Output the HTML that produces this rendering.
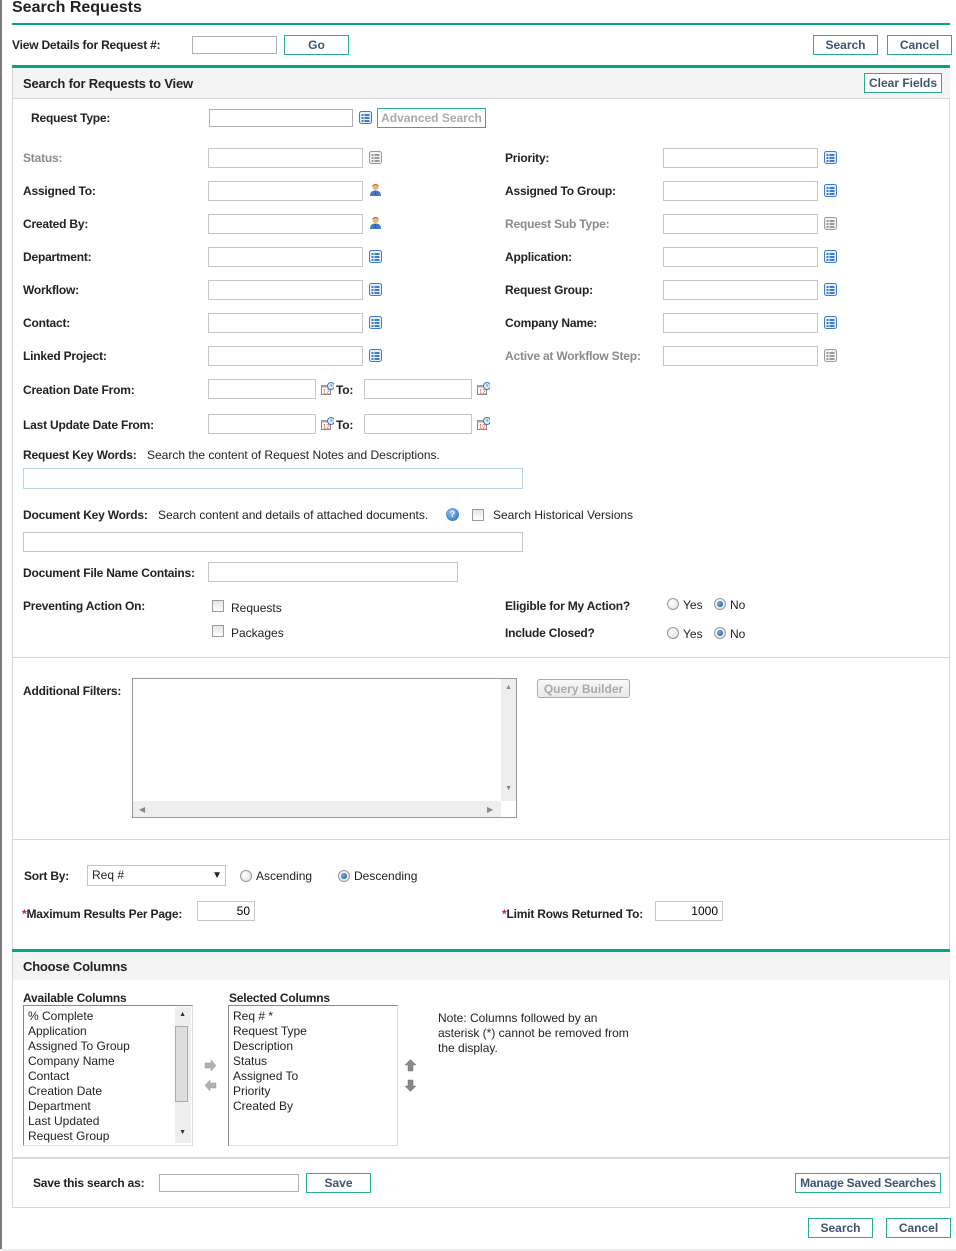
<!DOCTYPE html>
<html><head><meta charset="utf-8"><style>
body{margin:0;width:956px;height:1251px;position:relative;background:#fff;font-family:"Liberation Sans",Arial,sans-serif;overflow:hidden}
.a{position:absolute}
.lb{position:absolute;font-weight:bold;font-size:12px;color:#222;line-height:14px;white-space:nowrap;letter-spacing:-0.2px}
.dl{color:#8a8a8a}
.tx{position:absolute;font-size:12px;color:#222;line-height:14px;white-space:nowrap}
.in{position:absolute;border:1px solid #c6c6c6;background:#fff;box-sizing:border-box;height:20px}
.bt{position:absolute;border:1px solid #27b08d;background:#fff;box-sizing:border-box;font-weight:bold;font-size:12px;color:#3c5573;text-align:center;line-height:19px}
.hl{position:absolute;background:#d6d6d6;height:1px}
.ic{position:absolute;width:13px;height:13px}
.cb{position:absolute;width:11px;height:11px;border:1px solid #9a9a9a;background:linear-gradient(#e6e6e6,#fff);box-sizing:border-box}
.rd{position:absolute;width:12px;height:12px;border-radius:50%;border:1px solid #999;background:radial-gradient(circle at 40% 40%,#fff,#ddd);box-sizing:border-box}
.rd.on::after{content:"";position:absolute;left:2px;top:2px;width:6px;height:6px;border-radius:50%;background:radial-gradient(circle at 40% 40%,#6fb0ef,#0b4c93)}
.li{font-size:12px;color:#222;line-height:15px}
.ar{position:absolute;width:13px;height:13px}
</style></head><body>
<svg width="0" height="0" style="position:absolute"><defs>
<g id="lst"><rect x="0.5" y="0.5" width="12" height="12" rx="2" fill="#e8f1fb" stroke="#3d7cc9"/><rect x="2.5" y="3" width="2" height="2" fill="#3d7cc9"/><rect x="5.5" y="3" width="5" height="2" fill="#3d7cc9"/><rect x="2.5" y="6" width="2" height="2" fill="#3d7cc9"/><rect x="5.5" y="6" width="5" height="2" fill="#3d7cc9"/><rect x="2.5" y="9" width="2" height="2" fill="#3d7cc9"/><rect x="5.5" y="9" width="5" height="2" fill="#3d7cc9"/></g>
<g id="lstg"><rect x="0.5" y="0.5" width="12" height="12" rx="2" fill="#f4f4f4" stroke="#999"/><rect x="2.5" y="3" width="2" height="2" fill="#999"/><rect x="5.5" y="3" width="5" height="2" fill="#999"/><rect x="2.5" y="6" width="2" height="2" fill="#999"/><rect x="5.5" y="6" width="5" height="2" fill="#999"/><rect x="2.5" y="9" width="2" height="2" fill="#999"/><rect x="5.5" y="9" width="5" height="2" fill="#999"/></g>
<g id="usr"><circle cx="6.5" cy="4" r="3" fill="#f0b070"/><path d="M3.5 3.5 Q6.5 0 9.5 3.5 L9.5 2.5 Q6.5 -0.5 3.5 2.5Z" fill="#a0521d"/><path d="M1 13 Q1 7.5 6.5 7.5 Q12 7.5 12 13Z" fill="#3c7ccc"/><path d="M6 8 L7 8 L7.3 12 L5.7 12Z" fill="#d02020"/></g>
<g id="cal"><rect x="0.5" y="3.5" width="9" height="9" fill="#fff" stroke="#888"/><rect x="0.5" y="3.5" width="9" height="2" fill="#aaa"/><text x="2" y="11.5" font-size="6" fill="#e04020" font-family="Liberation Sans">12</text><circle cx="10" cy="4" r="3.5" fill="#dfeefc" stroke="#3b78c0"/><path d="M10 2 V4 H11.5" stroke="#3b78c0" fill="none" stroke-width="0.8"/></g>
<g id="arr"><path d="M1 4 H7 V1 L12 6.5 L7 12 V9 H1Z" fill="#b0b0b0" stroke="#999" stroke-width="0.5"/></g>
<g id="up"><path d="M6.5 0.5 L12 6 H9 V12 H4 V6 H1Z" fill="#888" stroke="#777" stroke-width="0.5"/></g>
</defs></svg>

<div class="a" style="left:0;top:0;width:2px;height:1251px;background:#7a7a7a"></div>
<div class="a" style="left:12px;top:-1px;font-weight:bold;font-size:16px;color:#222">Search Requests</div>
<div class="a" style="left:12px;top:23px;width:938px;height:2px;background:#00a982"></div>
<div class="lb" style="left:12px;top:38px">View Details for Request #:</div>
<div class="in" style="left:192px;top:36px;width:85px;height:18px;border-color:#b0b0b0"></div>
<div class="bt" style="left:284px;top:35px;width:65px;height:20px">Go</div>
<div class="bt" style="left:813px;top:35px;width:65px;height:20px">Search</div>
<div class="bt" style="left:887px;top:35px;width:65px;height:20px">Cancel</div>

<div class="a" style="left:12px;top:65px;width:938px;height:3px;background:#00a982"></div>
<div class="a" style="left:12px;top:68px;width:938px;height:1090px;border:1px solid #d6d6d6;border-top:none;box-sizing:border-box"></div>
<div class="a" style="left:13px;top:68px;width:937px;height:30px;background:#f4f4f4;border-bottom:1px solid #d6d6d6"></div>
<div class="a" style="left:23px;top:76px;font-weight:bold;font-size:13px;color:#222;letter-spacing:-0.2px">Search for Requests to View</div>
<div class="bt" style="left:864px;top:73px;width:78px;height:20px">Clear Fields</div>

<div class="lb" style="left:31px;top:111px">Request Type:</div>
<div class="in" style="left:209px;top:109px;width:144px;height:18px;border-color:#b0b0b0"></div>
<svg class="ic" style="left:359px;top:111px"><use href="#lst"/></svg>
<div class="bt" style="left:377px;top:108px;width:109px;height:20px;color:#aaa;font-weight:bold">Advanced Search</div>

<div class="lb dl" style="left:23px;top:151px;font-weight:bold">Status:</div>
<div class="in" style="left:208px;top:148px;width:155px"></div><svg class="ic" style="left:369px;top:151px"><use href="#lstg"/></svg>
<div class="lb" style="left:505px;top:151px">Priority:</div>
<div class="in" style="left:663px;top:148px;width:155px"></div><svg class="ic" style="left:824px;top:151px"><use href="#lst"/></svg>

<div class="lb" style="left:23px;top:184px">Assigned To:</div>
<div class="in" style="left:208px;top:181px;width:155px"></div><svg class="ic" style="left:369px;top:183px"><use href="#usr"/></svg>
<div class="lb" style="left:505px;top:184px">Assigned To Group:</div>
<div class="in" style="left:663px;top:181px;width:155px"></div><svg class="ic" style="left:824px;top:184px"><use href="#lst"/></svg>

<div class="lb" style="left:23px;top:217px">Created By:</div>
<div class="in" style="left:208px;top:214px;width:155px"></div><svg class="ic" style="left:369px;top:216px"><use href="#usr"/></svg>
<div class="lb dl" style="left:505px;top:217px">Request Sub Type:</div>
<div class="in" style="left:663px;top:214px;width:155px"></div><svg class="ic" style="left:824px;top:217px"><use href="#lstg"/></svg>

<div class="lb" style="left:23px;top:250px">Department:</div>
<div class="in" style="left:208px;top:247px;width:155px"></div><svg class="ic" style="left:369px;top:250px"><use href="#lst"/></svg>
<div class="lb" style="left:505px;top:250px">Application:</div>
<div class="in" style="left:663px;top:247px;width:155px"></div><svg class="ic" style="left:824px;top:250px"><use href="#lst"/></svg>

<div class="lb" style="left:23px;top:283px">Workflow:</div>
<div class="in" style="left:208px;top:280px;width:155px"></div><svg class="ic" style="left:369px;top:283px"><use href="#lst"/></svg>
<div class="lb" style="left:505px;top:283px">Request Group:</div>
<div class="in" style="left:663px;top:280px;width:155px"></div><svg class="ic" style="left:824px;top:283px"><use href="#lst"/></svg>

<div class="lb" style="left:23px;top:316px">Contact:</div>
<div class="in" style="left:208px;top:313px;width:155px"></div><svg class="ic" style="left:369px;top:316px"><use href="#lst"/></svg>
<div class="lb" style="left:505px;top:316px">Company Name:</div>
<div class="in" style="left:663px;top:313px;width:155px"></div><svg class="ic" style="left:824px;top:316px"><use href="#lst"/></svg>

<div class="lb" style="left:23px;top:349px">Linked Project:</div>
<div class="in" style="left:208px;top:346px;width:155px"></div><svg class="ic" style="left:369px;top:349px"><use href="#lst"/></svg>
<div class="lb dl" style="left:505px;top:349px">Active at Workflow Step:</div>
<div class="in" style="left:663px;top:346px;width:155px"></div><svg class="ic" style="left:824px;top:349px"><use href="#lstg"/></svg>

<div class="lb" style="left:23px;top:383px">Creation Date From:</div>
<div class="in" style="left:208px;top:379px;width:108px"></div><svg class="ic" style="left:321px;top:382px"><use href="#cal"/></svg>
<div class="lb" style="left:336px;top:383px">To:</div>
<div class="in" style="left:364px;top:379px;width:108px"></div><svg class="ic" style="left:477px;top:382px"><use href="#cal"/></svg>

<div class="lb" style="left:23px;top:418px">Last Update Date From:</div>
<div class="in" style="left:208px;top:414px;width:108px"></div><svg class="ic" style="left:321px;top:417px"><use href="#cal"/></svg>
<div class="lb" style="left:336px;top:418px">To:</div>
<div class="in" style="left:364px;top:414px;width:108px"></div><svg class="ic" style="left:477px;top:417px"><use href="#cal"/></svg>

<div class="lb" style="left:23px;top:448px">Request Key Words:</div>
<div class="tx" style="left:147px;top:448px">Search the content of Request Notes and Descriptions.</div>
<div class="in" style="left:23px;top:468px;width:500px;height:21px;border-color:#b8d6e6"></div>

<div class="lb" style="left:23px;top:508px">Document Key Words:</div>
<div class="tx" style="left:158px;top:508px">Search content and details of attached documents.</div>
<div class="a" style="left:446px;top:508px;width:13px;height:13px;border-radius:50%;background:radial-gradient(circle at 40% 35%,#8fc3f3,#1f62b6);color:#fff;font:bold 9px 'Liberation Sans';text-align:center;line-height:13px">?</div>
<div class="cb" style="left:472px;top:509px;width:12px;height:12px"></div>
<div class="tx" style="left:493px;top:508px">Search Historical Versions</div>
<div class="in" style="left:23px;top:532px;width:500px"></div>

<div class="lb" style="left:23px;top:566px">Document File Name Contains:</div>
<div class="in" style="left:208px;top:562px;width:250px"></div>

<div class="lb" style="left:23px;top:599px">Preventing Action On:</div>
<div class="cb" style="left:212px;top:600px;width:12px;height:12px"></div><div class="tx" style="left:231px;top:601px">Requests</div>
<div class="cb" style="left:212px;top:625px;width:12px;height:12px"></div><div class="tx" style="left:231px;top:626px">Packages</div>

<div class="lb" style="left:505px;top:599px">Eligible for My Action?</div>
<div class="rd" style="left:667px;top:598px"></div><div class="tx" style="left:683px;top:598px">Yes</div>
<div class="rd on" style="left:714px;top:598px"></div><div class="tx" style="left:730px;top:598px">No</div>
<div class="lb" style="left:505px;top:626px">Include Closed?</div>
<div class="rd" style="left:667px;top:627px"></div><div class="tx" style="left:683px;top:627px">Yes</div>
<div class="rd on" style="left:714px;top:627px"></div><div class="tx" style="left:730px;top:627px">No</div>

<div class="hl" style="left:13px;top:657px;width:937px"></div>

<div class="lb" style="left:23px;top:684px">Additional Filters:</div>
<div class="a" style="left:132px;top:678px;width:385px;height:140px;border:1px solid #999;box-sizing:border-box;background:#fff">
 <div class="a" style="right:0;top:0;width:15px;height:122px;background:#eee"></div>
 <div class="a" style="left:0;bottom:0;width:368px;height:16px;background:#eee"></div>
 <div class="a" style="right:4px;top:5px;font-size:7px;color:#888">▲</div>
 <div class="a" style="right:4px;top:106px;font-size:7px;color:#888">▼</div>
 <div class="a" style="left:6px;bottom:3px;font-size:8px;color:#888">◀</div>
 <div class="a" style="left:354px;bottom:3px;font-size:8px;color:#888">▶</div>
</div>
<div class="a" style="left:537px;top:679px;width:93px;height:19px;border:1px solid #aaa;border-radius:3px;background:linear-gradient(#fafafa,#e9e9e9);box-sizing:border-box;font:bold 12px 'Liberation Sans';color:#aaa;text-align:center;line-height:18px">Query Builder</div>

<div class="hl" style="left:13px;top:839px;width:937px"></div>

<div class="lb" style="left:24px;top:869px">Sort By:</div>
<div class="a" style="left:87px;top:865px;width:139px;height:21px;border:1px solid #c4c4c4;box-sizing:border-box;font-size:12px;color:#222;line-height:19px;padding-left:4px">Req #<span style="position:absolute;right:3px;top:0;font-size:10px">▼</span></div>
<div class="rd" style="left:240px;top:870px"></div><div class="tx" style="left:256px;top:869px">Ascending</div>
<div class="rd on" style="left:338px;top:870px"></div><div class="tx" style="left:354px;top:869px">Descending</div>

<div class="lb" style="left:22px;top:907px"><span style="color:#d02020">*</span>Maximum Results Per Page:</div>
<div class="in" style="left:197px;top:901px;width:58px;font-size:12px;text-align:right;padding-right:4px;line-height:18px">50</div>
<div class="lb" style="left:502px;top:907px"><span style="color:#d02020">*</span>Limit Rows Returned To:</div>
<div class="in" style="left:655px;top:901px;width:68px;font-size:12px;text-align:right;padding-right:4px;line-height:18px">1000</div>

<div class="a" style="left:12px;top:949px;width:938px;height:3px;background:#00a982"></div>
<div class="a" style="left:13px;top:952px;width:937px;height:28px;background:#f4f4f4"></div>
<div class="a" style="left:23px;top:959px;font-weight:bold;font-size:13px;color:#222;letter-spacing:-0.2px">Choose Columns</div>

<div class="lb" style="left:23px;top:991px">Available Columns</div>
<div class="a" style="left:23px;top:1005px;width:170px;height:141px;border:1px solid #888;border-right-color:#ddd;border-bottom-color:#ddd;box-sizing:border-box;padding:3px 0 0 4px">
 <div class="li">% Complete<br>Application<br>Assigned To Group<br>Company Name<br>Contact<br>Creation Date<br>Department<br>Last Updated<br>Request Group</div>
 <div class="a" style="right:1px;top:1px;width:16px;height:136px;background:#eee"></div>
 <div class="a" style="right:4px;top:20px;width:11px;height:74px;background:#ddd;border:1px solid #aaa"></div>
 <div class="a" style="right:6px;top:5px;font-size:7px;color:#333">▲</div>
 <div class="a" style="right:6px;top:123px;font-size:7px;color:#333">▼</div>
</div>
<svg class="ar" style="left:204px;top:1059px"><use href="#arr"/></svg>
<svg class="ar" style="left:204px;top:1079px;transform:scaleX(-1)"><use href="#arr"/></svg>
<div class="lb" style="left:229px;top:991px">Selected Columns</div>
<div class="a" style="left:228px;top:1005px;width:170px;height:141px;border:1px solid #888;border-right-color:#ddd;border-bottom-color:#ddd;box-sizing:border-box;padding:3px 0 0 4px">
 <div class="li">Req # *<br>Request Type<br>Description<br>Status<br>Assigned To<br>Priority<br>Created By</div>
</div>
<svg class="ar" style="left:404px;top:1059px"><use href="#up"/></svg>
<svg class="ar" style="left:404px;top:1079px;transform:scaleY(-1)"><use href="#up"/></svg>
<div class="tx" style="left:438px;top:1011px;line-height:15px">Note: Columns followed by an<br>asterisk (*) cannot be removed from<br>the display.</div>

<div class="a" style="left:12px;top:1158px;width:938px;height:50px;border:1px solid #d6d6d6;box-sizing:border-box"></div>
<div class="lb" style="left:33px;top:1176px">Save this search as:</div>
<div class="in" style="left:159px;top:1174px;width:140px;height:18px;border-color:#b0b0b0"></div>
<div class="bt" style="left:306px;top:1173px;width:65px;height:20px">Save</div>
<div class="bt" style="left:795px;top:1173px;width:146px;height:20px;letter-spacing:-0.2px">Manage Saved Searches</div>

<div class="bt" style="left:808px;top:1218px;width:65px;height:20px">Search</div>
<div class="bt" style="left:886px;top:1218px;width:65px;height:20px">Cancel</div>
<div class="a" style="left:0;top:1249px;width:956px;height:2px;background:#eee"></div>
</body></html>
